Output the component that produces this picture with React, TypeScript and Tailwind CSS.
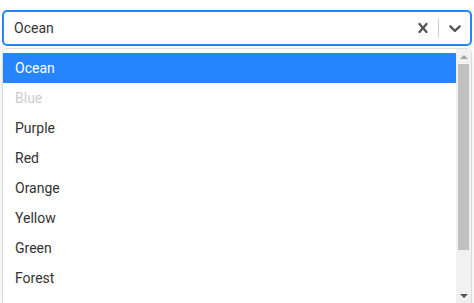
import React from "react";

const options = [
  { label: "Ocean", selected: true },
  { label: "Blue", disabled: true },
  { label: "Purple" },
  { label: "Red" },
  { label: "Orange" },
  { label: "Yellow" },
  { label: "Green" },
  { label: "Forest" },
  { label: "Slate" },
  { label: "Silver" },
];

function ClearIcon() {
  return (
    <svg width="20" height="20" viewBox="0 0 20 20" fill="currentColor" aria-hidden="true">
      <path d="M14.348 14.849c-0.469 0.469-1.229 0.469-1.697 0l-2.651-3.030-2.651 3.029c-0.469 0.469-1.229 0.469-1.697 0-0.469-0.469-0.469-1.229 0-1.697l2.758-3.15-2.759-3.152c-0.469-0.469-0.469-1.228 0-1.697s1.228-0.469 1.697 0l2.652 3.031 2.651-3.031c0.469-0.469 1.228-0.469 1.697 0s0.469 1.229 0 1.697l-2.758 3.152 2.758 3.15c0.469 0.469 0.469 1.229 0 1.698z" />
    </svg>
  );
}

function ChevronIcon() {
  return (
    <svg width="20" height="20" viewBox="0 0 20 20" fill="currentColor" aria-hidden="true">
      <path d="M4.516 7.548c0.436-0.446 1.043-0.481 1.576 0l3.908 3.747 3.908-3.747c0.533-0.481 1.141-0.446 1.574 0 0.436 0.445 0.408 1.197 0 1.615-0.406 0.418-4.695 4.502-4.695 4.502-0.217 0.223-0.502 0.335-0.787 0.335s-0.57-0.112-0.789-0.335c0 0-4.287-4.084-4.695-4.502s-0.436-1.17 0-1.615z" />
    </svg>
  );
}

// headless chrome hides native scrollbars, so the classic one is drawn here
function Scrollbar() {
  return (
    <div className="flex w-[15px] shrink-0 flex-col bg-[#f1f1f1]">
      <div className="flex h-[15px] items-center justify-center">
        <span className="h-0 w-0 border-x-[4px] border-b-[4px] border-x-transparent border-b-[#a3a3a3]" />
      </div>
      <div className="flex-1">
        <div className="mx-[2px] h-[186px] bg-[#c1c1c1]" />
      </div>
      <div className="flex h-[15px] items-center justify-center">
        <span className="h-0 w-0 border-x-[4px] border-t-[4px] border-x-transparent border-t-[#505050]" />
      </div>
    </div>
  );
}

export default function App() {
  return (
    <div className="w-[474px] h-[303px] overflow-hidden bg-white px-[3px] pt-[11px] font-['Roboto',sans-serif] text-[14px]">
      <div className="flex h-[34px] items-center rounded-[4px] border border-[#2684ff] bg-white shadow-[0_0_0_1px_#2684ff]">
        <div className="flex-1 px-[10px] text-[#333]">Ocean</div>
        <div className="flex items-center self-stretch">
          <div className="pl-[6px] pr-[5px] text-[#555]">
            <ClearIcon />
          </div>
          <span className="my-[7px] w-px self-stretch bg-[#ccc]" />
          <div className="pl-[6px] pr-[5px] text-[#555]">
            <ChevronIcon />
          </div>
        </div>
      </div>

      <div className="mt-[4px] flex h-[254px] overflow-hidden rounded-t-[4px] bg-white shadow-[0_0_0_1px_rgba(0,0,0,0.1),0_4px_11px_rgba(0,0,0,0.1)]">
        <div className="h-[248px] flex-1 overflow-hidden pt-[4px]">
          {options.map((o) => (
            <div
              key={o.label}
              className={
                o.selected
                  ? "bg-[#2684ff] px-[12px] py-[6px] leading-[18px] text-white"
                  : o.disabled
                  ? "px-[12px] py-[6px] leading-[18px] text-[#ccc]"
                  : "px-[12px] py-[6px] leading-[18px] text-[#333]"
              }
            >
              {o.label}
            </div>
          ))}
        </div>
        <Scrollbar />
      </div>
    </div>
  );
}
